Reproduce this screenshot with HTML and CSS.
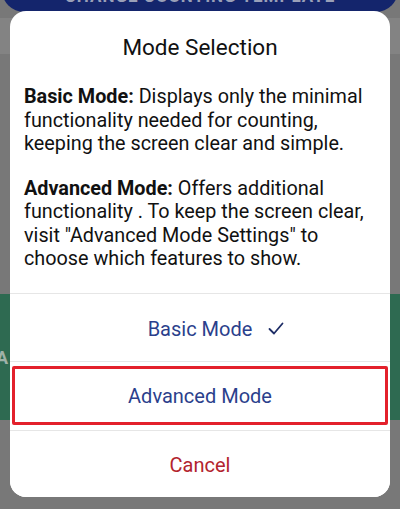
FILE: index.html
```html
<!DOCTYPE html>
<html lang="en">

<head>
    <meta charset="UTF-8">
    <meta name="viewport" content="width=device-width,initial-scale=1.0">
    <title>Mode Selection</title>
    <link rel="stylesheet" href="styles.css">
</head>

<body>
    <!-- Screen behind the dialog -->
    <main class="screen">
        <div class="template-btn">Change Counting Template</div>
        <div class="band"></div>
        <div class="counter-bar"><span class="counter-label">A</span></div>
    </main>

    <!-- Mode selection dialog -->
    <div class="overlay">
        <section class="dialog">
            <h2 class="dialog-title">Mode Selection</h2>
            <div class="dialog-body">
                <p><b>Basic Mode:</b> Displays only the minimal functionality needed for counting, keeping the screen clear and simple.</p>
                <p><b>Advanced Mode:</b> Offers additional functionality . To keep the screen clear, visit "Advanced Mode Settings" to choose which features to show.</p>
            </div>
            <div class="dialog-actions">
                <button class="action selected">
                    <span class="action-label">Basic Mode</span>
                    <svg class="check" width="16" height="13" viewBox="0 0 16 13">
                        <polyline points="1.5,7 6,11.5 14.5,1.5" fill="none" stroke="#1e2d66" stroke-width="1.8" stroke-linecap="round" stroke-linejoin="round" />
                    </svg>
                </button>
                <div class="action-wrap highlighted">
                    <button class="action">
                        <span class="action-label">Advanced Mode</span>
                    </button>
                </div>
                <button class="action cancel">
                    <span class="action-label">Cancel</span>
                </button>
            </div>
        </section>
    </div>
</body>

</html>
```

FILE: styles.css
```css
/* Base */
* {
    padding: 0;
    margin: 0;
    box-sizing: border-box;
}

body {
    width: 400px;
    height: 509px;
    overflow: hidden;
    background: #787878;
    font-family: Roboto, "Noto Sans", sans-serif;
}

/* Dimmed screen under the dialog */
.screen {
    display: flex;
    flex-direction: column;
    height: 100%;
}

.template-btn {
    height: 42px;
    margin: -30px 2px 0;
    padding-top: 16px;
    border-radius: 0 0 22px 22px;
    background: #14256c;
    color: #9aa0b8;
    font-weight: bold;
    font-size: 17px;
    letter-spacing: 1px;
    text-align: center;
    text-transform: uppercase;
}

.band {
    height: 36px;
    margin-top: 6px;
    background: #838383;
}

.counter-bar {
    display: flex;
    align-items: center;
    height: 126px;
    margin-top: 240px;
    background: #2e6a51;
}

.counter-label {
    margin-left: -4px;
    color: #9fb1a8;
    font-size: 18px;
    font-weight: bold;
}

/* Dialog */
.overlay {
    position: absolute;
    inset: 0;
    padding: 11px 10px 12px;
}

.dialog {
    display: flex;
    flex-direction: column;
    height: 100%;
    border-radius: 16px;
    background: #fff;
    overflow: hidden;
}

.dialog-title {
    padding-top: 22px;
    font-size: 22.5px;
    font-weight: normal;
    line-height: 28px;
    text-align: center;
    color: #111;
}

.dialog-body {
    display: flex;
    flex-direction: column;
    gap: 21px;
    padding: 24px 18px 22px 14px;
    font-size: 19.8px;
    line-height: 23.5px;
    color: #111;
}

/* Buttons */
.dialog-actions {
    display: flex;
    flex-direction: column;
    flex: 1;
}

.action {
    display: grid;
    grid-template-columns: 1fr auto 1fr;
    align-items: center;
    width: 100%;
    height: 68px;
    padding-top: 3px;
    border: none;
    border-top: 1px solid #e6e6e6;
    background: #fff;
    font-family: inherit;
    font-size: 20px;
    color: #2b3f8c;
}

.action-label {
    grid-column: 2;
}

.check {
    grid-column: 3;
    justify-self: start;
    margin-left: 16px;
}

.action-wrap {
    border-top: 1px solid #e6e6e6;
    padding: 4px 2px 5px;
}

.action-wrap .action {
    height: 59px;
    padding-top: 2px;
    border-top: none;
}

.highlighted .action {
    border: 3px solid #e3202b;
    border-radius: 2px;
}

.cancel {
    flex: 1;
    height: auto;
    color: #b3242e;
}
```
